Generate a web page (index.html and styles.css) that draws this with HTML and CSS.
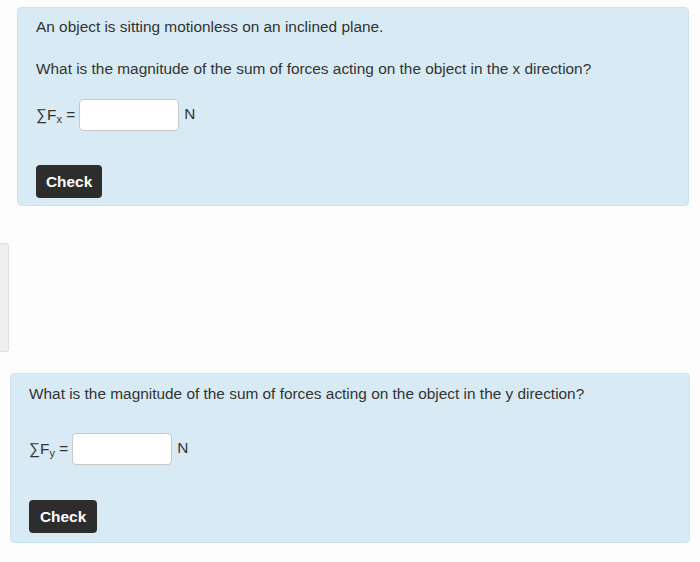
FILE: index.html
```html
<!DOCTYPE html>
<html lang="en">
<head>
  <meta charset="UTF-8" />
  <title>Forces on an Inclined Plane</title>
  <link rel="stylesheet" href="styles.css">
</head>
<body>
  <div class="card card-x">
    <p class="intro">An object is sitting motionless on an inclined plane.</p>
    <p class="question">What is the magnitude of the sum of forces acting on the object in the x direction?</p>
    <div class="answer-row">
      <span class="label">∑F<sub>x</sub> =</span>
      <input type="text" class="answer" id="fx">
      <span class="unit">N</span>
    </div>
    <button class="check-btn" onclick="checkAnswer('fx')">Check</button>
  </div>

  <div class="side-tab"></div>

  <div class="card card-y">
    <p class="question first">What is the magnitude of the sum of forces acting on the object in the y direction?</p>
    <div class="answer-row">
      <span class="label">∑F<sub>y</sub> =</span>
      <input type="text" class="answer" id="fy">
      <span class="unit">N</span>
    </div>
    <button class="check-btn" onclick="checkAnswer('fy')">Check</button>
  </div>

  <script>
    function checkAnswer(id) {
      const input = document.getElementById(id);
      input.style.borderColor = input.value.trim() === "0" ? "#5cb85c" : "#d9534f";
    }
  </script>
</body>
</html>
```

FILE: styles.css
```css
body {
  font-family: "Liberation Sans", Arial, sans-serif;
  font-size: 15.4px;
  color: #333;
  background: #fdfdfd;
  margin: 0;
  padding-top: 7px;
}

p {
  margin: 0;
  line-height: 20px;
}

.card {
  background: #d8ebf5;
  border: 1px solid #cbe3f0;
  border-radius: 4px;
  box-sizing: border-box;
}

.card-x {
  margin-left: 17px;
  width: 672px;
  height: 199px;
  padding: 9px 18px;
}

.card-y {
  margin-left: 10px;
  margin-top: 21px;
  width: 680px;
  height: 170px;
  padding: 10px 18px;
}

.question {
  margin-top: 22px;
}

.question.first {
  margin-top: 0;
}

.answer-row {
  display: flex;
  align-items: center;
  margin-top: 20px;
  height: 32px;
}

.card-y .answer-row {
  margin-top: 29px;
}

.label {
  white-space: nowrap;
  margin-right: 4px;
}

.label sub {
  font-size: 11px;
  vertical-align: -3px;
}

.answer {
  width: 100px;
  height: 32px;
  box-sizing: border-box;
  border: 1px solid #c8c8c8;
  border-radius: 4px;
  background: #fff;
  font-size: 15px;
  padding: 0 6px;
}

.unit {
  margin-left: 5px;
  margin-top: -3px;
}

.check-btn {
  display: block;
  margin-top: 34px;
  height: 33px;
  padding: 0 10px;
  border: none;
  border-radius: 4px;
  background: #2d2d2d;
  color: #fff;
  font-family: "Liberation Sans", Arial, sans-serif;
  font-size: 15.4px;
  font-weight: bold;
  cursor: pointer;
}

.card-y .check-btn {
  margin-top: 35px;
  padding: 0 11px;
}

.side-tab {
  margin-top: 37px;
  width: 9px;
  height: 109px;
  box-sizing: border-box;
  background: #efefef;
  border: 1px solid #dedede;
  border-left: none;
  border-radius: 0 3px 3px 0;
}
```
